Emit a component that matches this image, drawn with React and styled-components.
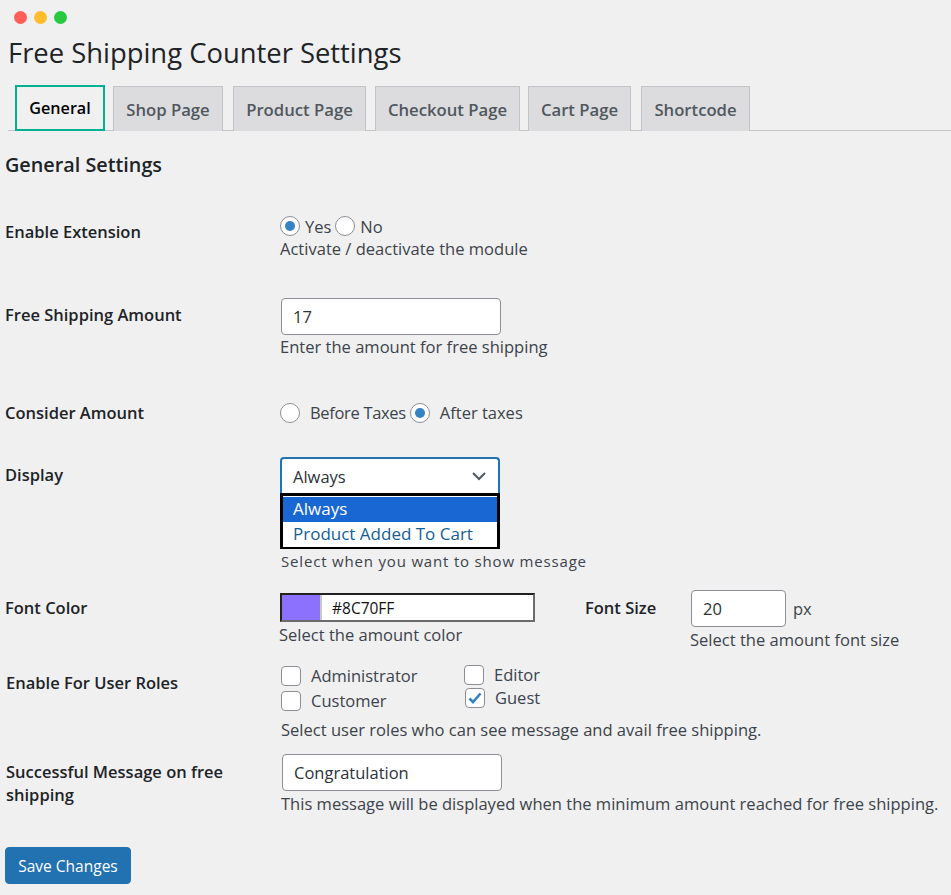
import React from 'react'
import styled, { createGlobalStyle } from 'styled-components'

const Global = createGlobalStyle`
  html, body { margin: 0; padding: 0; background: #f0f0f1; }
  body { font-family: "Open Sans", "Noto Sans", sans-serif; color: #3c434a; font-size: 16px; }
`
const Page = styled.div`
  width: 951px;
  height: 895px;
  overflow: hidden;
  padding-top: 11px;
  box-sizing: border-box;
`
const Dots = styled.div`
  display: flex;
  gap: 7px;
  padding-left: 14px;
  height: 13px;
`
const Dot = styled.span`
  width: 13px;
  height: 13px;
  border-radius: 50%;
  background: ${props => props.color};
`
const Title = styled.h1`
  margin: 9px 0 0 8px;
  height: 40px;
  font-size: 27.4px;
  line-height: 40px;
  font-weight: 400;
  color: #1d2327;
`
const Tabs = styled.div`
  display: flex;
  margin: 12px 0 0 8px;
  padding-left: 7px;
  height: 45px;
  border-bottom: 1px solid #c3c4c7;
`
const Tab = styled.div`
  box-sizing: border-box;
  width: ${props => props.w}px;
  margin-right: ${props => props.gap}px;
  height: ${props => (props.active ? 46 : 45)}px;
  margin-top: ${props => (props.active ? 0 : 1)}px;
  display: flex;
  align-items: center;
  justify-content: center;
  font-size: ${props => (props.active ? 16.2 : 16.7)}px;
  font-weight: 600;
  color: ${props => (props.active ? '#000' : '#50575e')};
  background: ${props => (props.active ? '#f0f0f1' : '#dcdcde')};
  border: ${props => (props.active ? '2px solid #00b191' : '1px solid #c3c4c7')};
  border-bottom-width: ${props => (props.active ? 2 : 0)}px;
`
const Heading = styled.h2`
  margin: 20px 0 0 5px;
  height: 27px;
  font-size: 19.8px;
  line-height: 27px;
  font-weight: 600;
  color: #1d2327;
`
const Row = styled.div`
  display: grid;
  grid-template-columns: ${props => props.labelWidth || 275}px 1fr;
  margin-top: ${props => props.top}px;
  padding-left: ${props => props.left || 5}px;
`
const Label = styled.div`
  font-size: 16.5px;
  font-weight: 600;
  line-height: 23px;
  color: #1d2327;
  padding-top: ${props => props.pad || 0}px;
`
const Field = styled.div`
  position: relative;
  min-width: 0;
`
const Line = styled.div`
  display: flex;
  align-items: center;
  height: ${props => props.h || 23}px;
  padding-left: ${props => props.indent || 0}px;
  font-size: 16.5px;
  line-height: 23px;
  color: #3c434a;
  white-space: nowrap;
`
const Tight = styled.span`
  letter-spacing: -0.33px;
`
const Help = styled.div`
  font-size: ${props => props.size || 16.55}px;
  letter-spacing: ${props => props.spacing || 0}px;
  line-height: 23px;
  height: 23px;
  margin-top: ${props => props.top || 0}px;
  color: #3c434a;
  white-space: nowrap;
  margin-left: ${props => props.shift || 0}px;
`
const Radio = styled.span`
  box-sizing: border-box;
  width: 20px;
  height: 20px;
  border-radius: 50%;
  border: 1px solid #8c8f94;
  background: #fff;
  flex: none;
  margin-right: ${props => props.gap}px;
  margin-left: ${props => props.before || 0}px;
  display: flex;
  align-items: center;
  justify-content: center;
  &::after {
    content: '';
    display: ${props => (props.checked ? 'block' : 'none')};
    width: 10px;
    height: 10px;
    border-radius: 50%;
    background: #3582c4;
  }
`
const Input = styled.div`
  box-sizing: border-box;
  width: ${props => props.w || 220}px;
  height: 37px;
  margin-left: ${props => props.shift || 0}px;
  padding: 0 11px;
  display: flex;
  align-items: center;
  background: #fff;
  border: 1px solid #8c8f94;
  border-radius: 4px;
  font-size: 16.5px;
  color: #2c3338;
`
const Select = styled.div`
  box-sizing: border-box;
  width: 220px;
  height: 38px;
  padding: 0 11px 2px;
  display: flex;
  align-items: center;
  justify-content: space-between;
  background: #fff;
  border: 2px solid #2271b1;
  border-bottom: none;
  border-radius: 4px 4px 0 0;
  font-size: 16.5px;
  color: #2c3338;
`
const ListBox = styled.div`
  position: absolute;
  top: 36px;
  left: 0;
  box-sizing: border-box;
  width: 220px;
  height: 56px;
  border: 3px solid #000;
  background: #fff;
  font-size: 17px;
`
const Option = styled.div`
  height: 25px;
  padding-left: 10px;
  margin-top: ${props => (props.selected ? 1 : 0)}px;
  line-height: 24px;
  background: ${props => (props.selected ? '#1967d2' : '#fff')};
  color: ${props => (props.selected ? '#fff' : '#135e96')};
`
const ColorGrid = styled.div`
  display: grid;
  grid-template-columns: 305px 106px auto;
`
const ColorBox = styled.div`
  box-sizing: border-box;
  width: 255px;
  height: 29px;
  margin-top: 3px;
  display: flex;
  background: #fff;
  border: 2px solid #6b6b6b;
  border-top-color: #222;
  border-left-color: #222;
  font-size: 15.5px;
  color: #111;
  align-items: center;
`
const Swatch = styled.span`
  width: 38px;
  height: 100%;
  background: #8c70ff;
  border-right: 2px solid #c8c8c8;
  margin-right: 10px;
`
const Spacer = styled.div`
  height: ${props => props.h}px;
`
const Unit = styled.span`
  margin-left: 7px;
`
const Roles = styled.div`
  display: grid;
  grid-template-columns: 183px auto;
  justify-content: start;
`
const RoleColumn = styled.div`
  padding-top: ${props => props.top || 0}px;
`
const Check = styled.span`
  box-sizing: border-box;
  width: 20px;
  height: 20px;
  flex: none;
  margin-right: 10px;
  background: #fff;
  border: 1px solid #8c8f94;
  border-radius: 4px;
  display: flex;
  align-items: center;
  justify-content: center;
`
const SaveButton = styled.button`
  display: block;
  margin: 32px 0 0 5px;
  width: 126px;
  height: 37px;
  padding: 0;
  background: #2271b1;
  color: #fff;
  border: 1px solid #2271b1;
  border-radius: 4px;
  font-family: inherit;
  font-size: 15.5px;
`

const tabs = [
  ['General', 90, 8],
  ['Shop Page', 110, 10],
  ['Product Page', 133, 9],
  ['Checkout Page', 145, 8],
  ['Cart Page', 103, 10],
  ['Shortcode', 109, 0],
]

const App = () => (
  <Page>
    <Global />
    <Dots>
      <Dot color="#ff5f57" />
      <Dot color="#ffbd2e" />
      <Dot color="#28c840" />
    </Dots>
    <Title>Free Shipping Counter Settings</Title>
    <Tabs>
      {tabs.map(([name, w, gap], i) => (
        <Tab key={name} w={w} gap={gap} active={i === 0}>
          {name}
        </Tab>
      ))}
    </Tabs>
    <Heading>General Settings</Heading>

    <Row top={37}>
      <Label pad={5}>Enable Extension</Label>
      <Field>
        <Line h={22}>
          <Radio checked gap={5} />
          Yes
          <Radio gap={5} before={4} />
          No
        </Line>
        <Help>Activate / deactivate the module</Help>
      </Field>
    </Row>

    <Row top={38}>
      <Label pad={5}>Free Shipping Amount</Label>
      <Field>
        <Input shift={1}>17</Input>
        <Help>Enter the amount for free shipping</Help>
      </Field>
    </Row>

    <Row top={43}>
      <Label>Consider Amount</Label>
      <Field>
        <Line>
          <Radio gap={10} />
          <Tight>Before Taxes</Tight>
          <Radio checked gap={10} before={4} />
          After taxes
        </Line>
      </Field>
    </Row>

    <Row top={33}>
      <Label pad={6}>Display</Label>
      <Field>
        <Select>
          Always
          <svg width="16" height="16" viewBox="0 0 16 16" fill="none">
            <path d="M2 5l6 6 6-6" stroke="#50575e" strokeWidth="2" />
          </svg>
        </Select>
        <ListBox>
          <Option selected>Always</Option>
          <Option>Product Added To Cart</Option>
        </ListBox>
        <Spacer h={55} />
        <Help size={15} spacing={0.82} shift={1}>Select when you want to show message</Help>
      </Field>
    </Row>

    <Row top={17} labelWidth={275}>
      <Label pad={6}>Font Color</Label>
      <Field>
        <ColorGrid>
          <div>
            <ColorBox>
              <Swatch />
              #8C70FF
            </ColorBox>
            <Help shift={-1} top={1}>Select the amount color</Help>
          </div>
          <Label pad={6}>Font Size</Label>
          <div>
            <Line h={37}>
              <Input w={95}>20</Input>
              <Unit>px</Unit>
            </Line>
            <Help shift={-1} top={1}>Select the amount font size</Help>
          </div>
        </ColorGrid>
      </Field>
    </Row>

    <Row top={3} left={6} labelWidth={275}>
      <Label pad={17}>Enable For User Roles</Label>
      <Field>
        <Roles>
          <RoleColumn top={9}>
            <Line h={25}>
              <Check />
              Administrator
            </Line>
            <Line h={25}>
              <Check />
              Customer
            </Line>
          </RoleColumn>
          <RoleColumn top={9}>
            <Line h={23}>
              <Check />
              Editor
            </Line>
            <Line h={23} indent={1}>
              <Check>
                <svg width="16" height="16" viewBox="0 0 16 16" fill="none">
                  <path d="M2.5 8.5l3.5 3.5 7.5-8.5" stroke="#3582c4" strokeWidth="2.6" />
                </svg>
              </Check>
              Guest
            </Line>
          </RoleColumn>
        </Roles>
        <Help top={5}>Select user roles who can see message and avail free shipping.</Help>
      </Field>
    </Row>

    <Row top={13} left={6} labelWidth={275}>
      <Label pad={6}>
        Successful Message on free
        <br />
        shipping
      </Label>
      <Field>
        <Input shift={1}>Congratulation</Input>
        <Help top={1}>This message will be displayed when the minimum amount reached for free shipping.</Help>
      </Field>
    </Row>

    <SaveButton>Save Changes</SaveButton>
  </Page>
)

export default App
